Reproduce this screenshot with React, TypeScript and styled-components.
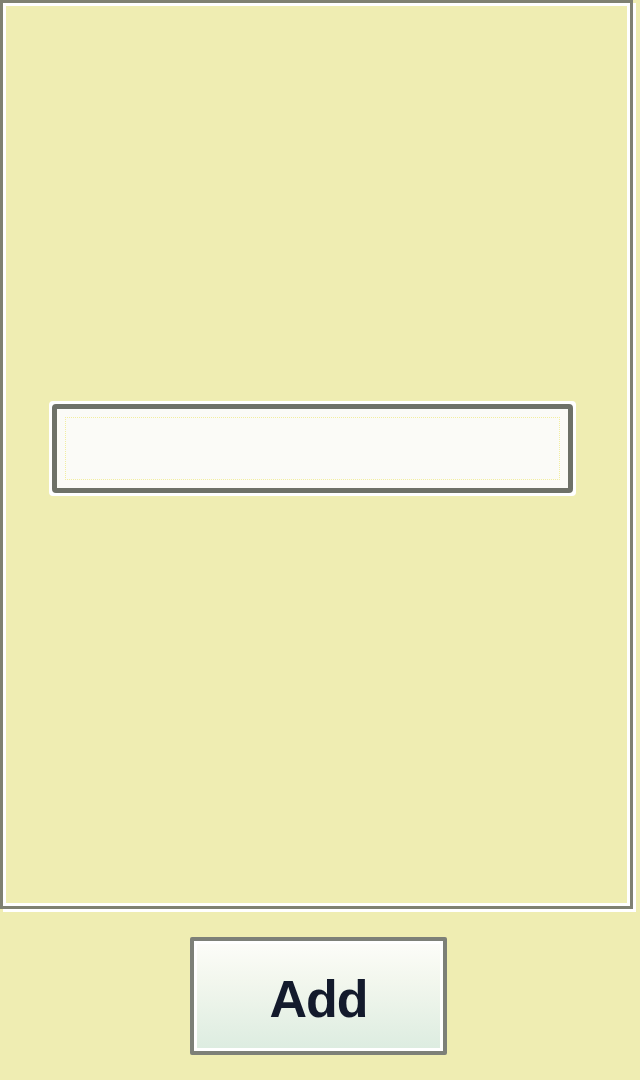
import React from "react";
import styled, { createGlobalStyle } from "styled-components";

const GlobalStyle = createGlobalStyle`
  html, body {
    margin: 0;
    padding: 0;
    background: #efedb2;
  }
  body {
    font-family: "Liberation Sans", Arial, sans-serif;
  }
`;

const Page = styled.div`
  width: 640px;
  height: 1080px;
  background: #efedb2;
  display: flex;
  flex-direction: column;
  align-items: flex-start;
  overflow: hidden;
`;

const Panel = styled.div`
  box-sizing: border-box;
  width: 633px;
  height: 909px;
  border: 3px solid #7f8172;
  box-shadow: inset 0 0 0 3px #ffffff, 3px 3px 0 0 #ffffff;
  display: flex;
  flex-direction: column;
  padding: 398px 0 0 46px;
`;

const FieldRing = styled.div`
  width: 527px;
  padding: 3px;
  border-radius: 4px;
  background: #ffffff;
  box-sizing: border-box;
`;

const Field = styled.input`
  box-sizing: border-box;
  display: block;
  width: 100%;
  height: 89px;
  border: 5px solid #6e7168;
  border-radius: 4px;
  background: #fbfbf7;
  outline: 1px dotted #f2eea0;
  outline-offset: -14px;
  font-size: 30px;
  font-family: "Liberation Sans", Arial, sans-serif;
`;

const Footer = styled.div`
  width: 640px;
  display: flex;
  justify-content: center;
  padding-top: 28px;
  padding-left: 0px;
`;

const Button = styled.button`
  box-sizing: border-box;
  width: 257px;
  height: 118px;
  margin-left: -3px;
  border: 4px solid #7d8078;
  border-radius: 2px;
  box-shadow: inset 0 0 0 3px #ffffff;
  background: linear-gradient(#fdfdf9 0%, #f3f7ee 35%, #dcece0 100%);
  font-family: "Liberation Sans", Arial, sans-serif;
  font-weight: bold;
  font-size: 52px;
  color: #131a2c;
  letter-spacing: -1px;
  padding: 6px 0 0 0;
  cursor: pointer;
`;

export default function App() {
  return (
    <Page>
      <GlobalStyle />
      <Panel>
        <FieldRing>
          <Field type="text" />
        </FieldRing>
      </Panel>
      <Footer>
        <Button>Add</Button>
      </Footer>
    </Page>
  );
}
